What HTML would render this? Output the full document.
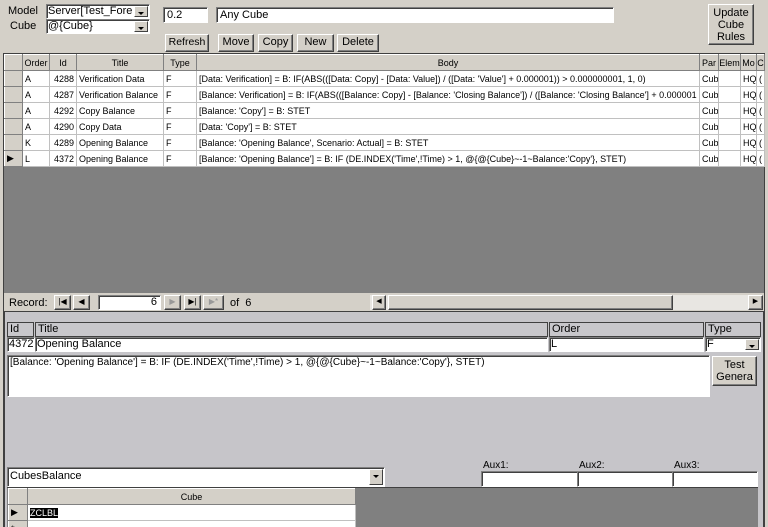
<!DOCTYPE html><html><head><style>
*{box-sizing:border-box;margin:0;padding:0}
html{width:768px;height:527px;overflow:hidden}
body{width:768px;height:527px;overflow:hidden;background:#d4d0c8;font-family:"Liberation Sans",Arial,sans-serif;font-size:10px;color:#000;position:relative}
.a{position:absolute}
.in{position:absolute;background:#fff;border:1px solid;border-color:#808080 #fff #fff #808080;box-shadow:inset 1px 1px 0 #404040;padding:1px 3px;white-space:nowrap;overflow:hidden;font-size:11px}
.btn{position:absolute;background:#d4d0c8;border:1px solid;border-color:#fff #404040 #404040 #fff;box-shadow:inset -1px -1px 0 #808080;text-align:center;font-size:11px;line-height:15px;white-space:nowrap;overflow:hidden}
.dd{position:absolute;right:1px;top:1px;width:14px;bottom:1px;background:#d4d0c8;border:1px solid;border-color:#fff #404040 #404040 #fff}
.dd:after{content:"";position:absolute;left:3px;top:5px;border:3px solid transparent;border-top:3px solid #000}
table{border-collapse:collapse;table-layout:fixed}
td{border:1px solid #c0c0c0;height:16px;font-size:9px;padding:0 2px;white-space:nowrap;overflow:hidden;background:#fff}
th{background:#d4d0c8;border:1px solid;border-color:#fff #808080 #808080 #fff;font-weight:normal;font-size:9px;height:16px;white-space:nowrap;overflow:hidden}
td.s{background:#d4d0c8;border-color:#fff #808080 #808080 #fff}
.lb{position:absolute;background:#c8c7cb;border:1px solid;border-color:#404040;padding:0 2px;font-size:11px;line-height:13px;white-space:nowrap;overflow:hidden}
</style></head><body>
<div class="a" style="left:8px;top:5px;font-size:11px">Model</div>
<div class="a" style="left:10px;top:20px;font-size:11px">Cube</div>
<div class="in" style="left:46px;top:4px;width:104px;height:15px;padding:0 1px;line-height:13px">Server[Test_Fore<span class="dd"></span></div>
<div class="in" style="left:46px;top:19px;width:104px;height:15px;padding:0 1px;line-height:13px">@{Cube}<span class="dd"></span></div>
<div class="in" style="left:163px;top:7px;width:45px;height:16px">0.2</div>
<div class="in" style="left:216px;top:7px;width:398px;height:16px">Any Cube</div>
<div class="btn" style="left:165px;top:34px;width:44px;height:18px;font-size:10.5px">Refresh</div>
<div class="btn" style="left:218px;top:34px;width:36px;height:18px">Move</div>
<div class="btn" style="left:258px;top:34px;width:35px;height:18px">Copy</div>
<div class="btn" style="left:297px;top:34px;width:37px;height:18px">New</div>
<div class="btn" style="left:337px;top:34px;width:42px;height:18px">Delete</div>
<div class="btn" style="left:708px;top:4px;width:46px;height:41px;line-height:12px;padding-top:2px">Update<br>Cube<br>Rules</div>

<div class="a" style="left:3px;top:53px;width:762px;height:259px;background:#808080;border:1px solid #404040"></div>
<table class="a" style="left:4px;top:54px;width:760px">
<colgroup><col style="width:18px"><col style="width:27px"><col style="width:27px"><col style="width:87px"><col style="width:33px"><col style="width:503px"><col style="width:19px"><col style="width:22px"><col style="width:16px"><col style="width:8px"></colgroup>
<tr><th></th><th>Order</th><th>Id</th><th>Title</th><th>Type</th><th>Body</th><th>Par</th><th>Elem</th><th>Mo</th><th>C</th></tr>
<tr><td class="s"></td><td>A</td><td style="text-align:right">4288</td><td>Verification Data</td><td>F</td><td>[Data: Verification] = B: IF(ABS(([Data: Copy] - [Data: Value]) / ([Data: 'Value'] + 0.000001)) &gt; 0.000000001, 1, 0)</td><td>Cub</td><td></td><td>HQ</td><td>(</td></tr>
<tr><td class="s"></td><td>A</td><td style="text-align:right">4287</td><td>Verification Balance</td><td>F</td><td>[Balance: Verification] = B: IF(ABS(([Balance: Copy] - [Balance: 'Closing Balance']) / ([Balance: 'Closing Balance'] + 0.000001</td><td>Cub</td><td></td><td>HQ</td><td>(</td></tr>
<tr><td class="s"></td><td>A</td><td style="text-align:right">4292</td><td>Copy Balance</td><td>F</td><td>[Balance: 'Copy'] = B: STET</td><td>Cub</td><td></td><td>HQ</td><td>(</td></tr>
<tr><td class="s"></td><td>A</td><td style="text-align:right">4290</td><td>Copy Data</td><td>F</td><td>[Data: 'Copy'] = B: STET</td><td>Cub</td><td></td><td>HQ</td><td>(</td></tr>
<tr><td class="s"></td><td>K</td><td style="text-align:right">4289</td><td>Opening Balance</td><td>F</td><td>[Balance: 'Opening Balance', Scenario: Actual] = B: STET</td><td>Cub</td><td></td><td>HQ</td><td>(</td></tr>
<tr><td class="s">&#9654;</td><td>L</td><td style="text-align:right">4372</td><td>Opening Balance</td><td>F</td><td>[Balance: 'Opening Balance'] = B: IF (DE.INDEX('Time',!Time) &gt; 1, @{@{Cube}~-1~Balance:'Copy'}, STET)</td><td>Cub</td><td></td><td>HQ</td><td>(</td></tr>
</table>
<div class="a" style="left:4px;top:293px;width:760px;height:18px;background:#d4d0c8"></div>
<div class="a" style="left:9px;top:297px;font-size:11px">Record:</div>
<div class="btn" style="left:54px;top:295px;width:17px;height:15px;line-height:12px;font-size:8px">|◀</div>
<div class="btn" style="left:73px;top:295px;width:17px;height:15px;line-height:12px;font-size:8px">◀</div>
<div class="in" style="left:98px;top:295px;width:63px;height:15px;text-align:right;line-height:12px;padding:0 3px">6</div>
<div class="btn" style="left:164px;top:295px;width:17px;height:15px;line-height:12px;font-size:8px;color:#999">▶</div>
<div class="btn" style="left:184px;top:295px;width:17px;height:15px;line-height:12px;font-size:8px">▶|</div>
<div class="btn" style="left:203px;top:295px;width:21px;height:15px;line-height:12px;font-size:8px;color:#999">▶*</div>
<div class="a" style="left:230px;top:297px;font-size:11px">of&nbsp; 6</div>
<div class="a" style="left:370px;top:295px;width:379px;height:15px;background:#e8e6e2"></div>
<div class="btn" style="left:372px;top:295px;width:14px;height:15px;font-size:7px;line-height:12px">◀</div>
<div class="btn" style="left:388px;top:295px;width:285px;height:15px"></div>
<div class="btn" style="left:748px;top:295px;width:15px;height:15px;font-size:7px;line-height:12px">▶</div>

<div class="a" style="left:3px;top:312px;width:762px;height:215px;background:#c6c5c9;border-left:2px solid #404040;border-right:2px solid #404040"></div>
<div class="lb" style="left:7px;top:322px;width:27px;height:15px">Id</div>
<div class="lb" style="left:35px;top:322px;width:513px;height:15px">Title</div>
<div class="lb" style="left:549px;top:322px;width:155px;height:15px">Order</div>
<div class="lb" style="left:705px;top:322px;width:56px;height:15px">Type</div>
<div class="in" style="left:7px;top:337px;width:28px;height:15px;padding:0 1px;line-height:12px">4372</div>
<div class="in" style="left:35px;top:337px;width:513px;height:15px;padding:0 1px;line-height:12px">Opening Balance</div>
<div class="in" style="left:549px;top:337px;width:155px;height:15px;padding:0 1px;line-height:12px">L</div>
<div class="in" style="left:705px;top:337px;width:56px;height:15px;padding:0 1px;line-height:12px">F<span class="dd"></span></div>
<div class="in" style="left:7px;top:355px;width:703px;height:42px;padding:1px 2px;font-size:10px">[Balance: 'Opening Balance'] = B: IF (DE.INDEX('Time',!Time) &gt; 1, @{@{Cube}~-1~Balance:'Copy'}, STET)</div>
<div class="btn" style="left:712px;top:356px;width:45px;height:30px;line-height:12px;padding-top:2px;font-size:11px">Test<br>Genera</div>
<div class="a" style="left:483px;top:460px">Aux1:</div>
<div class="a" style="left:579px;top:460px">Aux2:</div>
<div class="a" style="left:674px;top:460px">Aux3:</div>
<div class="in" style="left:481px;top:471px;width:97px;height:16px"></div>
<div class="in" style="left:577px;top:471px;width:96px;height:16px"></div>
<div class="in" style="left:672px;top:471px;width:86px;height:16px"></div>
<div class="in" style="left:7px;top:467px;width:378px;height:20px;padding:1px 2px;font-size:11px;line-height:15px">CubesBalance<span class="dd"></span></div>
<div class="a" style="left:7px;top:487px;width:751px;height:40px;background:#808080;border-top:1px solid #404040;overflow:hidden">
<table class="a" style="left:1px;top:0;width:347px">
<colgroup><col style="width:19px"><col style="width:328px"></colgroup>
<tr><th></th><th>Cube</th></tr>
<tr><td class="s">&#9654;</td><td><span style="background:#000;color:#fff">ZCLBL</span></td></tr>
<tr><td class="s">*</td><td></td></tr>
</table></div>
</body></html>
